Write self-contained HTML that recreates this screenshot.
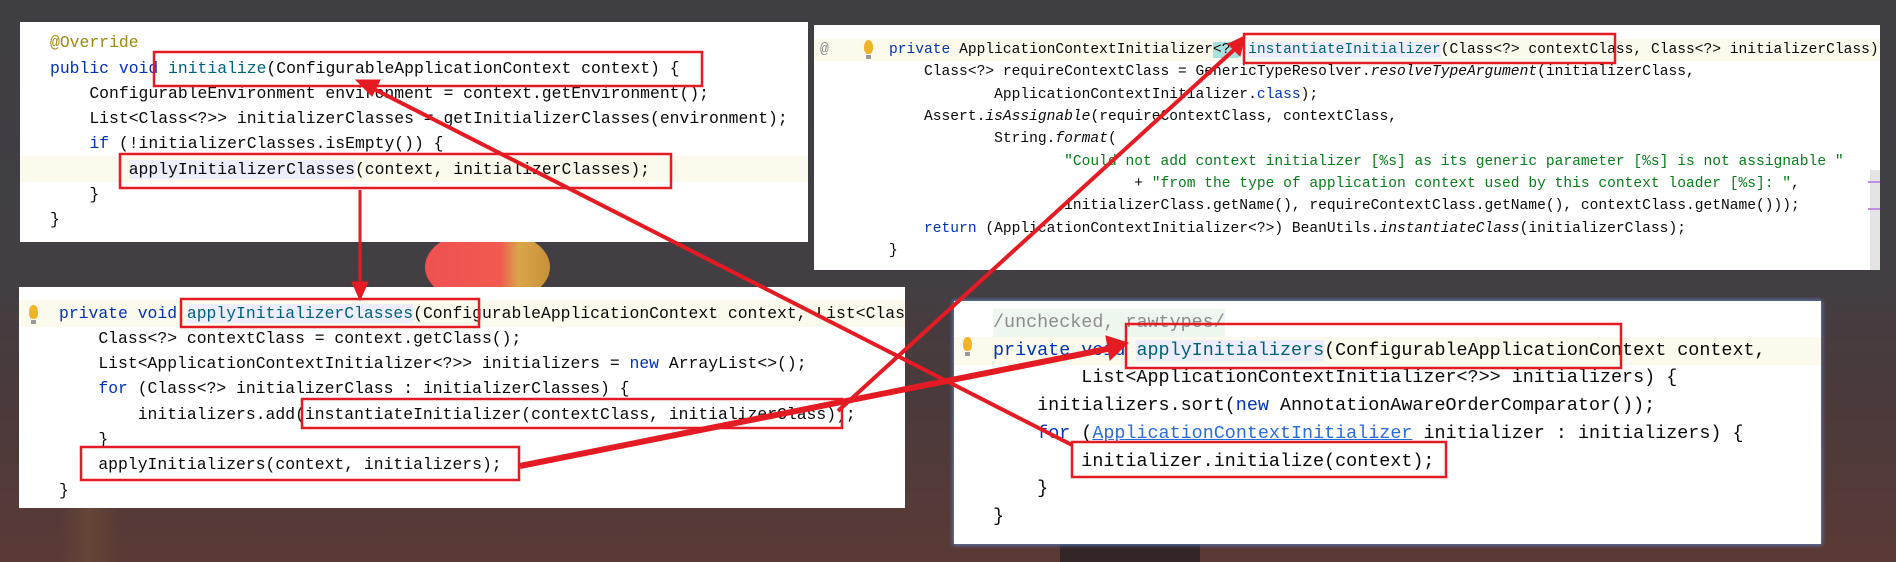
<!DOCTYPE html>
<html><head><meta charset="utf-8"><style>
*{margin:0;padding:0;box-sizing:border-box}
body{width:1896px;height:562px;overflow:hidden;position:relative;
background:linear-gradient(180deg,#3f3e43 0%,#413f44 45%,#4a3a3b 70%,#5a3a36 100%);
font-family:"Liberation Mono",monospace;}
.sun{position:absolute;left:425px;top:232px;width:125px;height:70px;border-radius:50%/60%;
background:linear-gradient(90deg,#ef5050 0%,#f05a50 60%,#d9a64a 75%,#c98f3a 100%);}
.p{position:absolute;background:#fff;overflow:hidden;}
.l{position:absolute;white-space:pre;color:#080808;}
.hl{position:absolute;left:0;right:0;background:#fcfaed;}
.k{color:#0033b3}.m{color:#00627a}.a{color:#9e880d}.s{color:#067d17}.i{font-style:italic}
.sel{background:#ededfc}
.bulb{position:absolute;width:9px;height:14px;border-radius:50% 50% 40% 40%;background:#f0b429}
.bulb:after{content:"";position:absolute;left:2px;top:15px;width:5px;height:4px;background:#9a9a9a}
</style></head><body>
<div class="sun"></div>
<div style="position:absolute;left:60px;top:300px;width:60px;height:262px;background:linear-gradient(90deg,transparent,#6b4a35,transparent);opacity:.7"></div>
<div style="position:absolute;left:1060px;top:520px;width:140px;height:42px;background:#2a2224;opacity:.8"></div>

<!-- panel 1 -->
<div class="p" style="left:20px;top:22px;width:788px;height:220px;font-size:16.4px;line-height:25px">
  <div class="hl" style="top:134px;height:26px"></div>
  <div class="l" style="left:30px;top:8px"><span class="a">@Override</span></div>
  <div class="l" style="left:30px;top:34px"><span class="k">public void </span><span class="m">initialize</span>(ConfigurableApplicationContext context) {</div>
  <div class="l" style="left:30px;top:59px">    ConfigurableEnvironment environment = context.getEnvironment();</div>
  <div class="l" style="left:30px;top:84px">    List&lt;Class&lt;?&gt;&gt; initializerClasses = getInitializerClasses(environment);</div>
  <div class="l" style="left:30px;top:109px">    <span class="k">if</span> (!initializerClasses.isEmpty()) {</div>
  <div class="l" style="left:30px;top:135px">        <span class="sel">applyInitializerClasses</span>(context, initializerClasses);</div>
  <div class="l" style="left:30px;top:160px">    }</div>
  <div class="l" style="left:30px;top:185px">}</div>
</div>

<!-- panel 2 -->
<div class="p" style="left:814px;top:25px;width:1066px;height:245px;font-size:14.6px;line-height:22px">
  <div class="hl" style="top:14px;height:22px"></div>
  <div style="position:absolute;right:0;top:145px;width:10px;height:100px;background:#e4e4e4"></div>
  <div style="position:absolute;right:0;top:156px;width:12px;height:2px;background:#c08ee0"></div>
  <div style="position:absolute;right:0;top:183px;width:12px;height:2px;background:#c08ee0"></div>
  <div class="l" style="left:6px;top:14px;color:#888">@</div>
  <div class="bulb" style="left:50px;top:15px"></div>
  <div class="l" style="left:75px;top:14px"><span class="k">private </span>ApplicationContextInitializer<span style="background:#a8e0dc">&lt;?&gt;</span> <span class="m sel">instantiateInitializer</span>(Class&lt;?&gt; contextClass, Class&lt;?&gt; initializerClass)</div>
  <div class="l" style="left:75px;top:36px">    Class&lt;?&gt; requireContextClass = GenericTypeResolver.<span class="i">resolveTypeArgument</span>(initializerClass,</div>
  <div class="l" style="left:75px;top:59px">            ApplicationContextInitializer.<span class="k">class</span>);</div>
  <div class="l" style="left:75px;top:81px">    Assert.<span class="i">isAssignable</span>(requireContextClass, contextClass,</div>
  <div class="l" style="left:75px;top:103px">            String.<span class="i">format</span>(</div>
  <div class="l" style="left:75px;top:126px">                    <span class="s">"Could not add context initializer [%s] as its generic parameter [%s] is not assignable "</span></div>
  <div class="l" style="left:75px;top:148px">                            + <span class="s">"from the type of application context used by this context loader [%s]: "</span>,</div>
  <div class="l" style="left:75px;top:170px">                    initializerClass.getName(), requireContextClass.getName(), contextClass.getName()));</div>
  <div class="l" style="left:75px;top:193px">    <span class="k">return</span> (ApplicationContextInitializer&lt;?&gt;) BeanUtils.<span class="i">instantiateClass</span>(initializerClass);</div>
  <div class="l" style="left:75px;top:215px">}</div>
</div>

<!-- panel 3 -->
<div class="p" style="left:19px;top:287px;width:886px;height:221px;font-size:16.4px;line-height:25px">
  <div class="hl" style="top:13px;height:27px"></div>
  <div class="bulb" style="left:10px;top:18px"></div>
  <div class="l" style="left:40px;top:14px"><span class="k">private void </span><span class="m sel">applyInitializerClasses</span>(ConfigurableApplicationContext context, List&lt;Class&lt;?&gt;&gt; initializerClasses) {</div>
  <div class="l" style="left:40px;top:39px">    Class&lt;?&gt; contextClass = context.getClass();</div>
  <div class="l" style="left:40px;top:64px">    List&lt;ApplicationContextInitializer&lt;?&gt;&gt; initializers = <span class="k">new</span> ArrayList&lt;&gt;();</div>
  <div class="l" style="left:40px;top:89px">    <span class="k">for</span> (Class&lt;?&gt; initializerClass : initializerClasses) {</div>
  <div class="l" style="left:40px;top:115px">        initializers.add(instantiateInitializer(contextClass, initializerClass));</div>
  <div class="l" style="left:40px;top:140px">    }</div>
  <div class="l" style="left:40px;top:165px">    applyInitializers(context, initializers);</div>
  <div class="l" style="left:40px;top:191px">}</div>
</div>

<!-- panel 4 -->
<div class="p" style="left:954px;top:301px;width:867px;height:243px;font-size:18.4px;line-height:27.7px;box-shadow:0 0 4px 1px #5a7fc0">
  <div class="hl" style="top:36px;height:28px"></div>
  <div class="l" style="left:39px;top:8px;color:#8c8c8c;background:#edf7ed">/unchecked, rawtypes/</div>
  <div class="bulb" style="left:9px;top:36px"></div>
  <div class="l" style="left:39px;top:36px"><span class="k">private void </span><span class="m sel">applyInitializers</span>(ConfigurableApplicationContext context,</div>
  <div class="l" style="left:39px;top:63px">        List&lt;ApplicationContextInitializer&lt;?&gt;&gt; initializers) {</div>
  <div class="l" style="left:39px;top:91px">    initializers.sort(<span class="k">new</span> AnnotationAwareOrderComparator());</div>
  <div class="l" style="left:39px;top:119px">    <span class="k">for</span> (<span style="color:#2a6bd8;text-decoration:underline">ApplicationContextInitializer</span> initializer : initializers) {</div>
  <div class="l" style="left:39px;top:147px">        initializer.initialize(context);</div>
  <div class="l" style="left:39px;top:174px">    }</div>
  <div class="l" style="left:39px;top:202px">}</div>
</div>

<svg width="1896" height="562" style="position:absolute;left:0;top:0">
<g fill="none" stroke="#e51b24" stroke-width="2.5">
<rect x="154" y="52" width="548" height="34"/>
<rect x="120" y="154" width="551" height="34"/>
<rect x="1244" y="34" width="371" height="29"/>
<rect x="181" y="299" width="298" height="28"/>
<rect x="302" y="399" width="540" height="29"/>
<rect x="81" y="447" width="438" height="33"/>
<rect x="1126" y="324" width="495" height="44"/>
<rect x="1072" y="442" width="374" height="35"/>
</g>
<g stroke="#e51b24" fill="#e51b24">
<line x1="360" y1="190" x2="360" y2="285" stroke-width="3"/>
<polygon points="352,282 368,282 360,300"/>
<line x1="1072" y1="445" x2="370" y2="87" stroke-width="4"/>
<polygon points="356,80 380,80 372,96"/>
<line x1="838" y1="411" x2="1236" y2="48" stroke-width="4"/>
<polygon points="1245,36 1228,44 1240,56"/>
<line x1="520" y1="466" x2="1112" y2="348" stroke-width="6"/>
<polygon points="1128,343 1106,336 1110,360"/>
</g>
</svg>
</body></html>
